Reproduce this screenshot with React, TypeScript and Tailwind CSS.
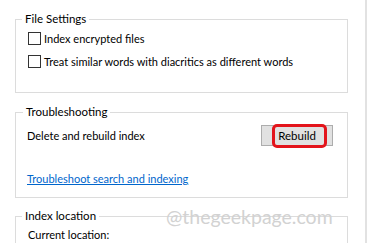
export default function App() {
  return (
    <div className="relative flex h-[243px] w-[369px] overflow-hidden bg-white font-['Lato',sans-serif] text-[11px] text-black">
      <div className="w-[365px] pl-[15px] pr-[17px] pt-[11px]">
        {/* File Settings */}
        <fieldset className="h-[82px] border border-[#dcdcdc] pl-[12px]">
          <legend className="ml-[-6px] px-[3px] text-[11.5px] leading-[16px]">File Settings</legend>
          <div className="mt-[5px] flex h-[13px] items-center gap-[3px]">
            <span className="h-[13px] w-[13px] border border-[#333333] bg-white" />
            <span className="leading-[16px]">Index encrypted files</span>
          </div>
          <div className="mt-[10px] flex h-[13px] items-center gap-[3px]">
            <span className="h-[13px] w-[13px] border border-[#333333] bg-white" />
            <span className="leading-[16px]">Treat similar words with diacritics as different words</span>
          </div>
        </fieldset>

        {/* Troubleshooting */}
        <fieldset className="mt-[11px] h-[94px] border border-[#dcdcdc] pl-[11px] pr-[14px]">
          <legend className="ml-[-4px] px-[3px] text-[11.5px] leading-[16px]">Troubleshooting</legend>
          <div className="mt-[5px] flex items-center justify-between">
            <span className="leading-[16px]">Delete and rebuild index</span>
            <div className="relative">
              <button className="h-[21px] w-[72px] border border-[#adadad] bg-[#e1e1e1] text-[11.5px] leading-[16px]">
                Rebuild
              </button>
              <span className="pointer-events-none absolute left-[11px] top-[-1px] h-[24px] w-[55px] rounded-[5px] border-[3px] border-[#e3141b]" />
            </div>
          </div>
          <div className="mt-[25px]">
            <a href="#" className="leading-[16px] text-[#0066cc] underline">
              Troubleshoot search and indexing
            </a>
          </div>
        </fieldset>

        {/* Index location */}
        <fieldset className="mt-[10px] h-[60px] border border-[#dcdcdc] pl-[12px]">
          <legend className="ml-[-6px] px-[3px] text-[11.5px] leading-[16px]">Index location</legend>
          <div className="mt-[3px] leading-[16px]">Current location:</div>
        </fieldset>
      </div>
      <div className="w-[2px] bg-[#e2e2e2]" />
      <div className="flex-1 bg-white" />

      <span className="pointer-events-none absolute left-[166px] top-[206px] text-[19.5px] leading-[22px] text-[#d2d2d2]">
        @thegeekpage.com
      </span>
    </div>
  );
}
